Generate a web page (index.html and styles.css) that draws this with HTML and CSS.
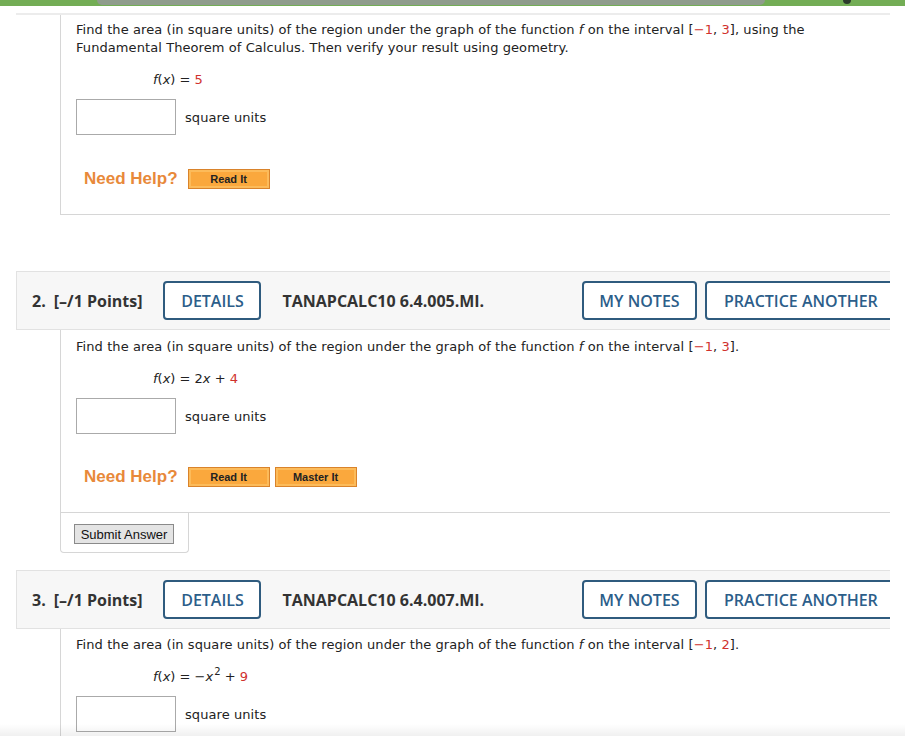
FILE: index.html
```html
<!DOCTYPE html>
<html>
<head>
<meta charset="utf-8">
<link rel="stylesheet" href="styles.css">
</head>
<body>
<div class="topbar"><div class="pill"></div><div class="glyph"></div></div>
<div class="wrap">
  <div class="prevhead"></div>
  <div class="qbody">
    <p class="prompt">Find the area (in square units) of the region under the graph of the function <i>f</i> on the interval [<span class="red">−1</span>, <span class="red">3</span>], using the Fundamental Theorem of Calculus. Then verify your result using geometry.</p>
    <p class="formula"><i>f</i>(<i>x</i>) = <span class="red">5</span></p>
    <div class="answer"><span class="inbox"></span><span class="unit">square units</span></div>
    <div class="help"><span class="needhelp">Need Help?</span><span class="obtn">Read It</span></div>
  </div>
  <div class="gap1"></div>

  <section class="question">
    <div class="qhead">
      <span class="qnum">2.</span><span class="pts">[–/1 Points]</span>
      <span class="btn details">DETAILS</span>
      <span class="qtitle">TANAPCALC10 6.4.005.MI.</span>
      <span class="btn notes">MY NOTES</span>
      <span class="btn practice">PRACTICE ANOTHER</span>
    </div>
    <div class="qbody">
      <p class="prompt">Find the area (in square units) of the region under the graph of the function <i>f</i> on the interval [<span class="red">−1</span>, <span class="red">3</span>].</p>
      <p class="formula"><i>f</i>(<i>x</i>) = 2<i>x</i> + <span class="red">4</span></p>
      <div class="answer"><span class="inbox"></span><span class="unit">square units</span></div>
      <div class="help help2"><span class="needhelp">Need Help?</span><span class="obtn">Read It</span><span class="obtn">Master It</span></div>
    </div>
    <div class="submittab"><span class="submit">Submit Answer</span></div>
  </section>

  <section class="question q3">
    <div class="qhead">
      <span class="qnum">3.</span><span class="pts">[–/1 Points]</span>
      <span class="btn details">DETAILS</span>
      <span class="qtitle">TANAPCALC10 6.4.007.MI.</span>
      <span class="btn notes">MY NOTES</span>
      <span class="btn practice">PRACTICE ANOTHER</span>
    </div>
    <div class="qbody">
      <p class="prompt">Find the area (in square units) of the region under the graph of the function <i>f</i> on the interval [<span class="red">−1</span>, <span class="red">2</span>].</p>
      <p class="formula"><i>f</i>(<i>x</i>) = −<i>x</i><sup>2</sup> + <span class="red">9</span></p>
      <div class="answer"><span class="inbox"></span><span class="unit">square units</span></div>
    </div>
  </section>
</div>
<div class="shade"></div>
</body>
</html>
```

FILE: styles.css
```css
html, body {
  margin: 0;
  padding: 0;
  background: #fff;
  height: 736px;
  overflow: hidden;
}
body {
  font-family: "DejaVu Sans", Verdana, sans-serif;
  color: #222;
  position: relative;
}
.topbar {
  height: 6px;
  background: #73ad55;
  position: relative;
}
.pill {
  position: absolute;
  left: 97px;
  width: 668px;
  top: 0;
  height: 5px;
  background: #8f9c8c;
  border-radius: 0 0 6px 6px;
}
.glyph {
  position: absolute;
  left: 843px;
  top: 0;
  width: 8px;
  height: 4px;
  background: #2b3a2b;
  border-radius: 0 0 4px 4px;
}
.wrap {
  margin-left: 16px;
  width: 874px;
  overflow: hidden;
}
.prevhead {
  height: 7px;
  border-bottom: 2px solid #ececec;
}
.qbody {
  margin-left: 44px;
  border-left: 1px solid #d6d6d6;
  border-bottom: 1px solid #d6d6d6;
  padding: 6px 0 25px 15px;
}
.prompt {
  margin: 0;
  font-size: 13px;
  line-height: 18px;
  letter-spacing: 0.08px;
  width: 750px;
}
.red { color: #d0312d; }
.formula {
  margin: 14px 0 0 0;
  padding-left: 77px;
  font-size: 13px;
  line-height: 18px;
}
.formula sup {
  font-size: 10px;
  line-height: 0;
  vertical-align: 6px;
  margin-left: 1px;
}
.answer {
  margin-top: 10px;
  display: flex;
  align-items: center;
  gap: 9px;
}
.inbox {
  width: 98px;
  height: 34px;
  border: 1px solid #aaa;
  background: #fff;
}
.unit {
  font-size: 13px;
  letter-spacing: 0.08px;
}
.help {
  margin-top: 34px;
  display: flex;
  align-items: center;
  padding-left: 8px;
  height: 20px;
}
.help2 { margin-top: 33px; }
.needhelp {
  font-family: "Liberation Sans", Arial, sans-serif;
  font-weight: bold;
  font-size: 17px;
  color: #e8893a;
  margin-right: 10px;
}
.obtn {
  box-sizing: border-box;
  width: 82px;
  height: 20px;
  margin-right: 5px;
  border: 1px solid #d9832b;
  box-shadow: inset 0 0 0 2px #fcbb5a;
  background: #faa83d;
  font-family: "Liberation Sans", Arial, sans-serif;
  font-weight: bold;
  font-size: 11px;
  color: #222;
  display: flex;
  align-items: center;
  justify-content: center;
}
.gap1 { height: 56px; }
.qhead {
  box-sizing: border-box;
  width: 940px;
  height: 59px;
  background: #f7f7f7;
  border: 1px solid #e2e2e2;
  display: flex;
  align-items: center;
  padding-left: 15px;
  font-family: "Open Sans", sans-serif;
  font-weight: bold;
  font-size: 16px;
  color: #333;
}
.qnum { margin-right: 8px; }
.pts { margin-right: 21px; }
.btn {
  box-sizing: border-box;
  height: 39px;
  border: 2px solid #2f5b7e;
  border-radius: 4px;
  background: #fff;
  color: #2c5e8a;
  font-weight: 600;
  font-size: 16px;
  display: flex;
  align-items: center;
  justify-content: center;
}
.details { width: 98px; margin-right: 21px; }
.qtitle { flex: 1; }
.notes { width: 115px; margin-right: 8px; }
.practice { width: 196px; margin-right: 54px; justify-content: flex-start; padding-left: 17px; }
.question .qbody {
  padding-top: 8px;
  padding-bottom: 25px;
}
.submittab {
  margin-left: 44px;
  width: 129px;
  height: 40px;
  border: 1px solid #d6d6d6;
  border-top: none;
  border-radius: 0 0 4px 4px;
  display: flex;
  align-items: flex-start;
  padding: 11px 0 0 13px;
  box-sizing: border-box;
}
.submit {
  box-sizing: border-box;
  width: 100px;
  height: 20px;
  background: #e4e4e4;
  border: 1px solid #8a8a8a;
  font-family: "Liberation Sans", Arial, sans-serif;
  font-size: 13px;
  color: #111;
  display: flex;
  align-items: center;
  justify-content: center;
}
.q3 { margin-top: 17px; }
.q3 .qbody { padding-top: 7px; }
.shade {
  position: absolute;
  left: 0;
  right: 0;
  bottom: 0;
  height: 12px;
  background: linear-gradient(to bottom, rgba(0,0,0,0), rgba(0,0,0,0.06));
}
```
